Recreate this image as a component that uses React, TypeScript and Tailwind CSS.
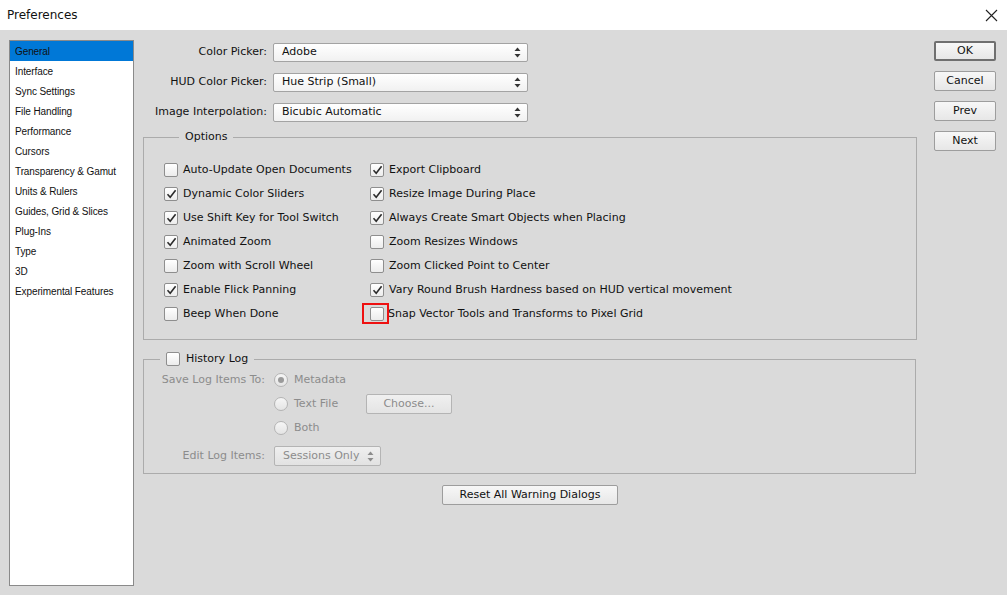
import React from "react";

const font = { fontFamily: '"DejaVu Sans", Verdana, sans-serif' };

function Check({ checked, disabled }: { checked?: boolean; disabled?: boolean }) {
  return (
    <span
      className={`inline-flex h-[14px] w-[14px] shrink-0 items-center justify-center rounded-[2px] border bg-gradient-to-b from-[#ffffff] to-[#ececec] ${
        disabled ? "border-[#b8b8b8]" : "border-[#8e8e8e]"
      }`}
    >
      {checked && (
        <svg width="11" height="10" viewBox="0 0 11 10">
          <path d="M1.5 5.2 L4.2 8.2 L9.6 1.2" fill="none" stroke="#2b2b2b" strokeWidth="1.6" />
        </svg>
      )}
    </span>
  );
}

function Radio({ checked }: { checked?: boolean }) {
  return (
    <span className="inline-flex h-[14px] w-[14px] shrink-0 items-center justify-center rounded-full border border-[#b4b4b4] bg-gradient-to-b from-[#f6f6f6] to-[#e4e4e4]">
      {checked && <span className="h-[6px] w-[6px] rounded-full bg-[#9a9a9a]" />}
    </span>
  );
}

function Arrows({ color = "#333" }: { color?: string }) {
  return (
    <svg width="7" height="11" viewBox="0 0 7 11">
      <path d="M3.5 0.5 L6.5 4 L0.5 4 Z" fill={color} />
      <path d="M3.5 10.5 L6.5 7 L0.5 7 Z" fill={color} />
    </svg>
  );
}

function Select({ value }: { value: string }) {
  return (
    <div className="flex h-[19px] w-[255px] items-center justify-between rounded-[2px] border border-[#a3a3a3] bg-gradient-to-b from-[#ffffff] to-[#f1f1f1] pl-[8px] pr-[6px] text-[11px] text-[#111]">
      <span>{value}</span>
      <Arrows />
    </div>
  );
}

function Btn({ label, def }: { label: string; def?: boolean }) {
  return (
    <div
      className={`flex h-[20px] w-[62px] items-center justify-center rounded-[2px] bg-gradient-to-b from-[#f7f7f7] to-[#e7e7e7] text-[11px] text-[#111] ${
        def ? "border-2 border-[#6f6f6f]" : "border border-[#9d9d9d]"
      }`}
    >
      {label}
    </div>
  );
}

const side = [
  "General",
  "Interface",
  "Sync Settings",
  "File Handling",
  "Performance",
  "Cursors",
  "Transparency & Gamut",
  "Units & Rulers",
  "Guides, Grid & Slices",
  "Plug-Ins",
  "Type",
  "3D",
  "Experimental Features",
];

const col1: [string, boolean][] = [
  ["Auto-Update Open Documents", false],
  ["Dynamic Color Sliders", true],
  ["Use Shift Key for Tool Switch", true],
  ["Animated Zoom", true],
  ["Zoom with Scroll Wheel", false],
  ["Enable Flick Panning", true],
  ["Beep When Done", false],
];
const col2: [string, boolean][] = [
  ["Export Clipboard", true],
  ["Resize Image During Place", true],
  ["Always Create Smart Objects when Placing", true],
  ["Zoom Resizes Windows", false],
  ["Zoom Clicked Point to Center", false],
  ["Vary Round Brush Hardness based on HUD vertical movement", true],
  ["Snap Vector Tools and Transforms to Pixel Grid", false],
];

export default function App() {
  return (
    <div className="h-[595px] w-[1007px] overflow-hidden bg-[#dadada] text-[#111]" style={font}>
      {/* title bar */}
      <div className="flex h-[30px] items-center justify-between bg-white pl-[7px] pr-[8px]">
        <span className="text-[12px] text-[#111]">Preferences</span>
        <svg width="13" height="13" viewBox="0 0 13 13" className="mr-[1px]">
          <path d="M1 1 L12 12 M12 1 L1 12" stroke="#222" strokeWidth="1.1" />
        </svg>
      </div>

      <div className="flex">
        {/* sidebar */}
        <div className="ml-[9px] mt-[10px] h-[546px] w-[125px] border border-[#8a8a8a] bg-white">
          {side.map((s, i) => (
            <div
              key={s}
              className={`flex h-[20px] items-center pl-[5px] tracking-[-0.1px] ${
                i === 0 ? "bg-[#0078d7] text-[#111]" : "text-[#111]"
              }`}
              style={{ fontFamily: '"Liberation Sans", Arial, sans-serif', fontSize: "10px" }}
            >
              {s}
            </div>
          ))}
        </div>

        {/* main */}
        <div className="ml-[9px] flex w-[774px] flex-col">
          <div className="mt-[13px] flex flex-col gap-[11px] text-[11px]">
            {[
              ["Color Picker:", "Adobe"],
              ["HUD Color Picker:", "Hue Strip (Small)"],
              ["Image Interpolation:", "Bicubic Automatic"],
            ].map(([l, v]) => (
              <div key={l} className="flex items-center">
                <span className="w-[124px] text-right">{l}</span>
                <span className="ml-[6px]">
                  <Select value={v} />
                </span>
              </div>
            ))}
          </div>

          {/* Options */}
          <fieldset className="mt-[8px] h-[210px] border border-[#ababab] pl-[20px]">
            <legend className="ml-[15px] px-[6px] text-[11px] leading-[14px]">Options</legend>
            <div className="mt-[14px] flex text-[11px]">
              <div className="flex w-[206px] flex-col">
                {col1.map(([l, c]) => (
                  <div key={l} className="flex h-[24px] items-center gap-[5px]">
                    <Check checked={c} />
                    <span>{l}</span>
                  </div>
                ))}
              </div>
              <div className="flex flex-col">
                {col2.map(([l, c], i) => (
                  <div key={l} className="flex h-[24px] items-center gap-[5px]">
                    <span className="relative inline-flex">
                      <Check checked={c} />
                      {i === 6 && (
                        <span className="absolute left-[-8px] top-[-4px] h-[21px] w-[27px] border-2 border-[#ee1111]" />
                      )}
                    </span>
                    <span className={i === 6 ? "-ml-[1px]" : ""}>{l}</span>
                  </div>
                ))}
              </div>
            </div>
          </fieldset>

          {/* History Log */}
          <fieldset className="mt-[12px] h-[122px] w-[773px] border border-[#ababab]">
            <legend className="ml-[16px] flex items-center gap-[6px] px-[6px] text-[11px] leading-[14px]">
              <Check />
              <span>History Log</span>
            </legend>
            <div className="mt-[2px] flex flex-col text-[11px] text-[#8c8c8c]">
              <div className="flex h-[24px] items-center">
                <span className="w-[121px] text-right">Save Log Items To:</span>
                <span className="ml-[9px] flex items-center gap-[6px]">
                  <Radio checked />
                  Metadata
                </span>
              </div>
              <div className="flex h-[24px] items-center">
                <span className="w-[121px]" />
                <span className="ml-[9px] flex w-[92px] items-center gap-[6px]">
                  <Radio />
                  Text File
                </span>
                <div className="flex h-[20px] w-[86px] items-center justify-center rounded-[2px] border border-[#b4b4b4] bg-gradient-to-b from-[#f0f0f0] to-[#e4e4e4]">
                  Choose...
                </div>
              </div>
              <div className="flex h-[24px] items-center">
                <span className="w-[121px]" />
                <span className="ml-[9px] flex items-center gap-[6px]">
                  <Radio />
                  Both
                </span>
              </div>
              <div className="mt-[6px] flex items-center">
                <span className="w-[121px] text-right">Edit Log Items:</span>
                <div className="ml-[9px] flex h-[20px] w-[107px] items-center justify-between rounded-[2px] border border-[#b4b4b4] bg-gradient-to-b from-[#efefef] to-[#e2e2e2] pl-[8px] pr-[6px]">
                  <span>Sessions Only</span>
                  <Arrows color="#8c8c8c" />
                </div>
              </div>
            </div>
          </fieldset>

          <div className="mt-[11px] flex justify-center">
            <div className="flex h-[20px] w-[176px] items-center justify-center rounded-[2px] border border-[#9d9d9d] bg-gradient-to-b from-[#f7f7f7] to-[#e7e7e7] text-[11px] text-[#111]">
              Reset All Warning Dialogs
            </div>
          </div>
        </div>

        {/* right buttons */}
        <div className="ml-[17px] mt-[11px] flex flex-col gap-[10px]">
          <Btn label="OK" def />
          <Btn label="Cancel" />
          <Btn label="Prev" />
          <Btn label="Next" />
        </div>
      </div>
    </div>
  );
}
